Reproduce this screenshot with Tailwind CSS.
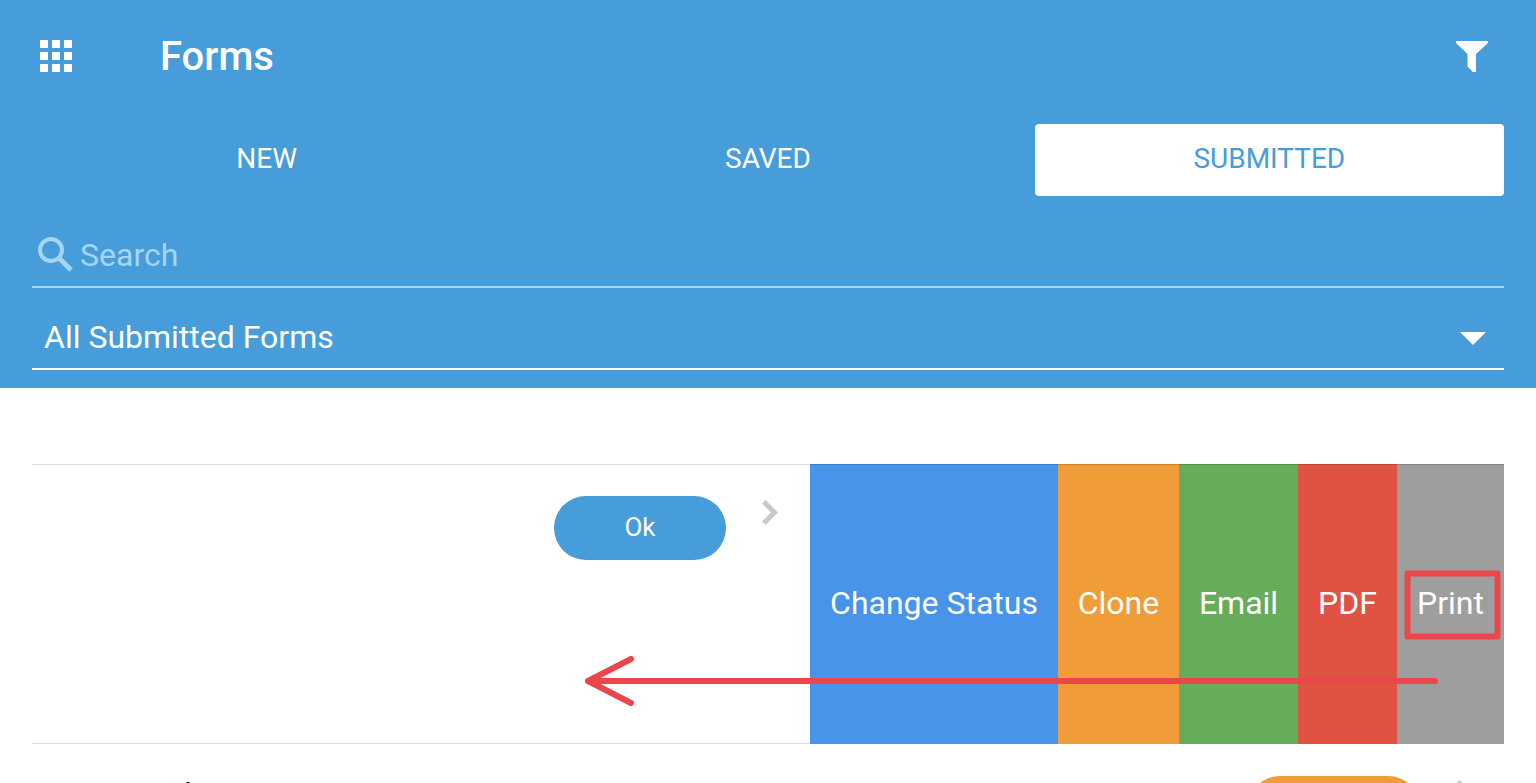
<!DOCTYPE html>
<html lang="en">
<head>
    <meta charset="UTF-8">
    <meta name="viewport" content="width=device-width, initial-scale=1.0">
    <title>Forms</title>
    <script src="https://cdn.jsdelivr.net/npm/@tailwindcss/browser@4"></script>
</head>
<body class="h-screen overflow-hidden bg-white font-[Roboto,sans-serif]">
    <header class="bg-[#479cda] px-8 pb-[18px] text-white">
        <!-- Title bar -->
        <div class="flex h-28 items-center px-2">
            <button type="button" aria-label="Menu" class="mr-22">
                <svg class="size-8" viewBox="0 0 32 32" fill="currentColor">
                    <path d="M0 0h8v8H0zM12 0h8v8h-8zM24 0h8v8h-8zM0 12h8v8H0zM12 12h8v8h-8zM24 12h8v8h-8zM0 24h8v8H0zM12 24h8v8h-8zM24 24h8v8h-8z"/>
                </svg>
            </button>
            <h1 class="flex-1 pt-0.5 text-[40px] leading-12 font-medium">Forms</h1>
            <button type="button" aria-label="Filter" class="mr-2">
                <svg class="size-8" viewBox="0 0 32 32" fill="currentColor">
                    <path d="M0 1h32v2L20 14v19h-2L11.500 26.500V14L0 3z"/>
                </svg>
            </button>
        </div>

        <!-- Tabs -->
        <nav class="mt-3 grid grid-cols-3 gap-8 text-[28px]">
            <button type="button" class="h-18 rounded pb-0.5">NEW</button>
            <button type="button" class="h-18 rounded pb-0.5">SAVED</button>
            <button type="button" class="h-18 rounded bg-white pb-0.5 text-[#479cda]">SUBMITTED</button>
        </nav>

        <!-- Search -->
        <div class="mt-6 flex h-17 items-center border-b-2 border-[#a3d7f1] pt-0.5 text-[#a3d7f1]">
            <label for="search" aria-label="Search" class="ml-1 w-11">
                <svg class="size-10" viewBox="0 0 40 40" fill="none" stroke="currentColor" stroke-width="4">
                    <circle cx="15" cy="16" r="11"/>
                    <path d="M23 24l12 12" stroke-width="5"/>
                </svg>
            </label>
            <input id="search" type="text" placeholder="Search" class="h-12 min-w-0 flex-1 pt-0.5 text-[32px] outline-none placeholder:text-[#a3d7f1]">
        </div>

        <!-- Form filter -->
        <div class="relative mt-4 border-b-2 border-white">
            <select aria-label="Form list" class="h-16 w-full appearance-none pt-0.5 pl-3 text-[32px] outline-none">
                <option>All Submitted Forms</option>
            </select>
            <svg class="pointer-events-none absolute top-7 right-[18px] h-[13px] w-[26px]" viewBox="0 0 26 13" fill="currentColor">
                <path d="M0 0h26L13 13z"/>
            </svg>
        </div>
    </header>

    <main class="px-8 pt-19">
        <!-- Row swiped open -->
        <div class="relative flex h-70">
            <div class="flex flex-1 justify-end border-y border-[#dedede] pt-[31px] pr-8">
                <button type="button" class="mr-9 h-16 w-43 rounded-full bg-[#479cda] pb-0.5 text-[26px] text-white">Ok</button>
                <svg class="mt-1 h-[25px] w-4" viewBox="0 0 16 25" fill="none" stroke="#c8c7cc" stroke-width="5">
                    <path d="M1.800 1.800L12.500 12.500L1.800 23.200"/>
                </svg>
            </div>
            <div class="flex text-[32px] text-white">
                <button type="button" class="w-62 border-t border-black/15 bg-[#4894eb] pb-1">Change Status</button>
                <button type="button" class="w-[121px] border-t border-black/15 bg-[#f09c38] pb-1">Clone</button>
                <button type="button" class="w-[119px] border-t border-black/15 bg-[#67ac5b] pb-1">Email</button>
                <button type="button" class="w-[99px] border-t border-black/15 bg-[#e05241] pb-1">PDF</button>
                <button type="button" class="w-[107px] border-t border-black/15 bg-[#9e9e9e] pb-1">Print</button>
            </div>

            <!-- Swipe arrow and highlight -->
            <svg class="pointer-events-none absolute top-0 right-0 h-70 w-[920px]" viewBox="0 0 920 280" fill="none" stroke="#ea464b" stroke-width="6" stroke-linecap="round" stroke-linejoin="round">
                <path d="M851 217H4M47 195L4 217L47 239"/>
                <rect x="823.500" y="109.500" width="90" height="63"/>
            </svg>
        </div>

        <!-- Next row -->
        <div class="flex h-70 pt-8 pr-8">
            <p class="flex-1 pl-38 text-[32px] leading-9 text-black">l</p>
            <button type="button" aria-label="Status" class="mr-9 h-16 w-43 rounded-full bg-[#f09c38]"></button>
            <svg class="mt-1 h-[25px] w-4" viewBox="0 0 16 25" fill="none" stroke="#c8c7cc" stroke-width="5">
                <path d="M1.800 1.800L12.500 12.500L1.800 23.200"/>
            </svg>
        </div>
    </main>
</body>
</html>
